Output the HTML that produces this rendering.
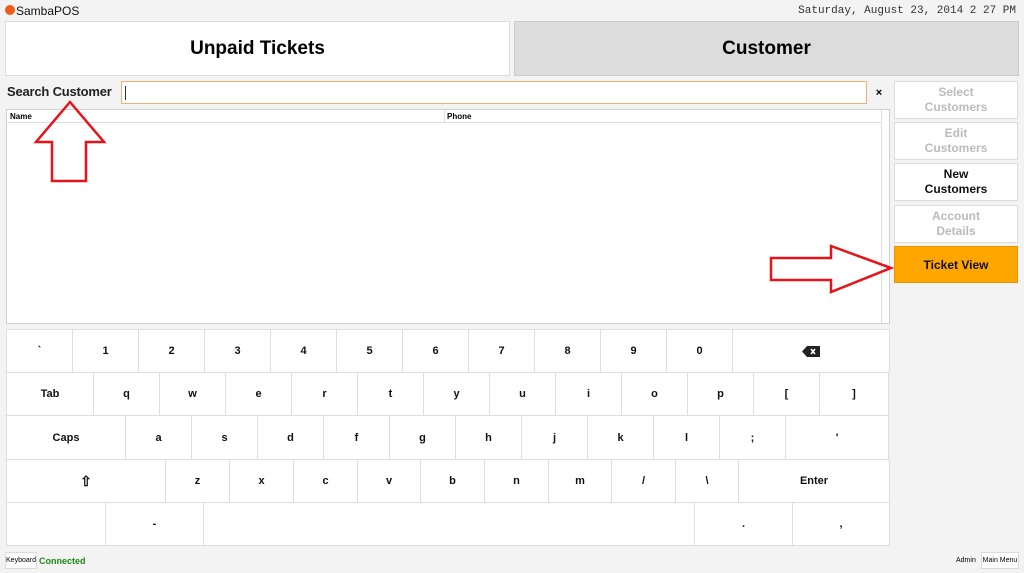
<!DOCTYPE html>
<html><head><meta charset="utf-8"><style>
*{box-sizing:border-box;margin:0;padding:0}
body{width:1024px;height:573px;background:#f3f3f3;font-family:"Liberation Sans",sans-serif;position:relative;overflow:hidden}
.a{position:absolute}
.btn{position:absolute;background:#fff;border:1px solid #dcdcdc;display:flex;align-items:center;justify-content:center;text-align:center;font-weight:bold}
.row{position:absolute;left:6px;width:883px;display:flex}
.row div{background:#fff;border:1px solid #dedede;margin-right:-1px;display:flex;align-items:center;justify-content:center;font-size:11px;font-weight:bold;color:#111}
</style></head><body>
<div class="a" style="left:5px;top:5px;width:10px;height:10px;border-radius:50%;background:#f05a1a"></div>
<div class="a" style="left:16px;top:4px;font-size:12px;color:#111">SambaPOS</div>
<div class="a" style="right:8px;top:5px;font-family:'Liberation Mono',monospace;font-size:11px;color:#333">Saturday, August 23, 2014 2 27 PM</div>
<div class="btn" style="left:5px;top:21px;width:505px;height:55px;font-size:19px">Unpaid Tickets</div>
<div class="btn" style="left:514px;top:21px;width:505px;height:55px;font-size:19px;background:#dcdcdc;border-color:#ccc">Customer</div>
<div class="a" style="left:7px;top:84px;font-size:13px;font-weight:bold;color:#222;letter-spacing:-0.2px">Search Customer</div>
<div class="a" style="left:121px;top:81px;width:746px;height:23px;background:#fff;border:1px solid #f0b070"><div style="position:absolute;left:3px;top:4px;width:1px;height:14px;background:#333"></div></div>
<div class="btn" style="left:868px;top:81px;width:22px;height:23px;border:none;font-size:11px;background:transparent">×</div>
<div class="a" style="left:6px;top:109px;width:884px;height:215px;background:#fff;border:1px solid #d0d0d0">
<div style="position:absolute;left:0;top:0;right:8px;height:13px;border-bottom:1px solid #ddd;font-size:8px;font-weight:bold;padding:2px 3px">Name<span style="position:absolute;left:437px;top:0;height:13px;border-left:1px solid #ddd;padding:2px 2px">Phone</span></div>
<div style="position:absolute;right:0;top:0;width:8px;bottom:0;border-left:1px solid #ddd"></div>
</div>
<div class="btn" style="left:894px;top:81px;width:124px;height:38px;font-size:12px;color:#bbb;line-height:15px">Select<br>Customers</div>
<div class="btn" style="left:894px;top:122px;width:124px;height:38px;font-size:12px;color:#bbb;line-height:15px">Edit<br>Customers</div>
<div class="btn" style="left:894px;top:163px;width:124px;height:38px;font-size:12px;color:#111;line-height:15px">New<br>Customers</div>
<div class="btn" style="left:894px;top:205px;width:124px;height:38px;font-size:12px;color:#bbb;line-height:15px">Account<br>Details</div>
<div class="btn" style="left:894px;top:246px;width:124px;height:37px;font-size:12px;color:#111;background:#ffa500;border-color:#e89500">Ticket View</div>
<div class="row" style="top:329px;height:44px"><div style="width:67px">`</div><div style="width:67px">1</div><div style="width:67px">2</div><div style="width:67px">3</div><div style="width:67px">4</div><div style="width:67px">5</div><div style="width:67px">6</div><div style="width:67px">7</div><div style="width:67px">8</div><div style="width:67px">9</div><div style="width:67px">0</div><div style="width:158px"><svg width="18" height="11" viewBox="0 0 18 11"><path d="M5 0H18V11H5L0 5.5Z" fill="#222"/><path d="M9 3L13 8M13 3L9 8" stroke="#fff" stroke-width="1.6"/></svg></div></div>
<div class="row" style="top:372px;height:44px"><div style="width:88px">Tab</div><div style="width:67px">q</div><div style="width:67px">w</div><div style="width:67px">e</div><div style="width:67px">r</div><div style="width:67px">t</div><div style="width:67px">y</div><div style="width:67px">u</div><div style="width:67px">i</div><div style="width:67px">o</div><div style="width:67px">p</div><div style="width:67px">[</div><div style="width:70px">]</div></div>
<div class="row" style="top:415px;height:45px"><div style="width:120px">Caps</div><div style="width:67px">a</div><div style="width:67px">s</div><div style="width:67px">d</div><div style="width:67px">f</div><div style="width:67px">g</div><div style="width:67px">h</div><div style="width:67px">j</div><div style="width:67px">k</div><div style="width:67px">l</div><div style="width:67px">;</div><div style="width:104px">'</div></div>
<div class="row" style="top:459px;height:44px"><div style="width:160px;font-size:14px">⇧</div><div style="width:65px">z</div><div style="width:65px">x</div><div style="width:65px">c</div><div style="width:64px">v</div><div style="width:65px">b</div><div style="width:65px">n</div><div style="width:64px">m</div><div style="width:65px">/</div><div style="width:64px">\</div><div style="width:152px">Enter</div></div>
<div class="row" style="top:502px;height:44px"><div style="width:100px"></div><div style="width:99px">-</div><div style="width:492px"></div><div style="width:99px">.</div><div style="width:98px">,</div></div>
<div class="btn" style="left:5px;top:552px;width:32px;height:17px;font-size:7px;font-weight:normal">Keyboard</div>
<div class="a" style="left:39px;top:556px;font-size:9px;color:#1a8a1a;font-weight:bold">Connected</div>
<div class="a" style="left:956px;top:557px;font-size:7px">Admin</div>
<div class="btn" style="left:981px;top:552px;width:38px;height:17px;font-size:7px;font-weight:normal">Main Menu</div>
<svg class="a" style="left:0;top:0" width="1024" height="573">
<path d="M70 102L104 142H86V181H52V142H36Z" fill="none" stroke="#e8121a" stroke-width="2.5"/>
<path d="M891 268L831 246V258H771V280H831V292Z" fill="none" stroke="#e8121a" stroke-width="2.5"/>
</svg>
</body></html>
